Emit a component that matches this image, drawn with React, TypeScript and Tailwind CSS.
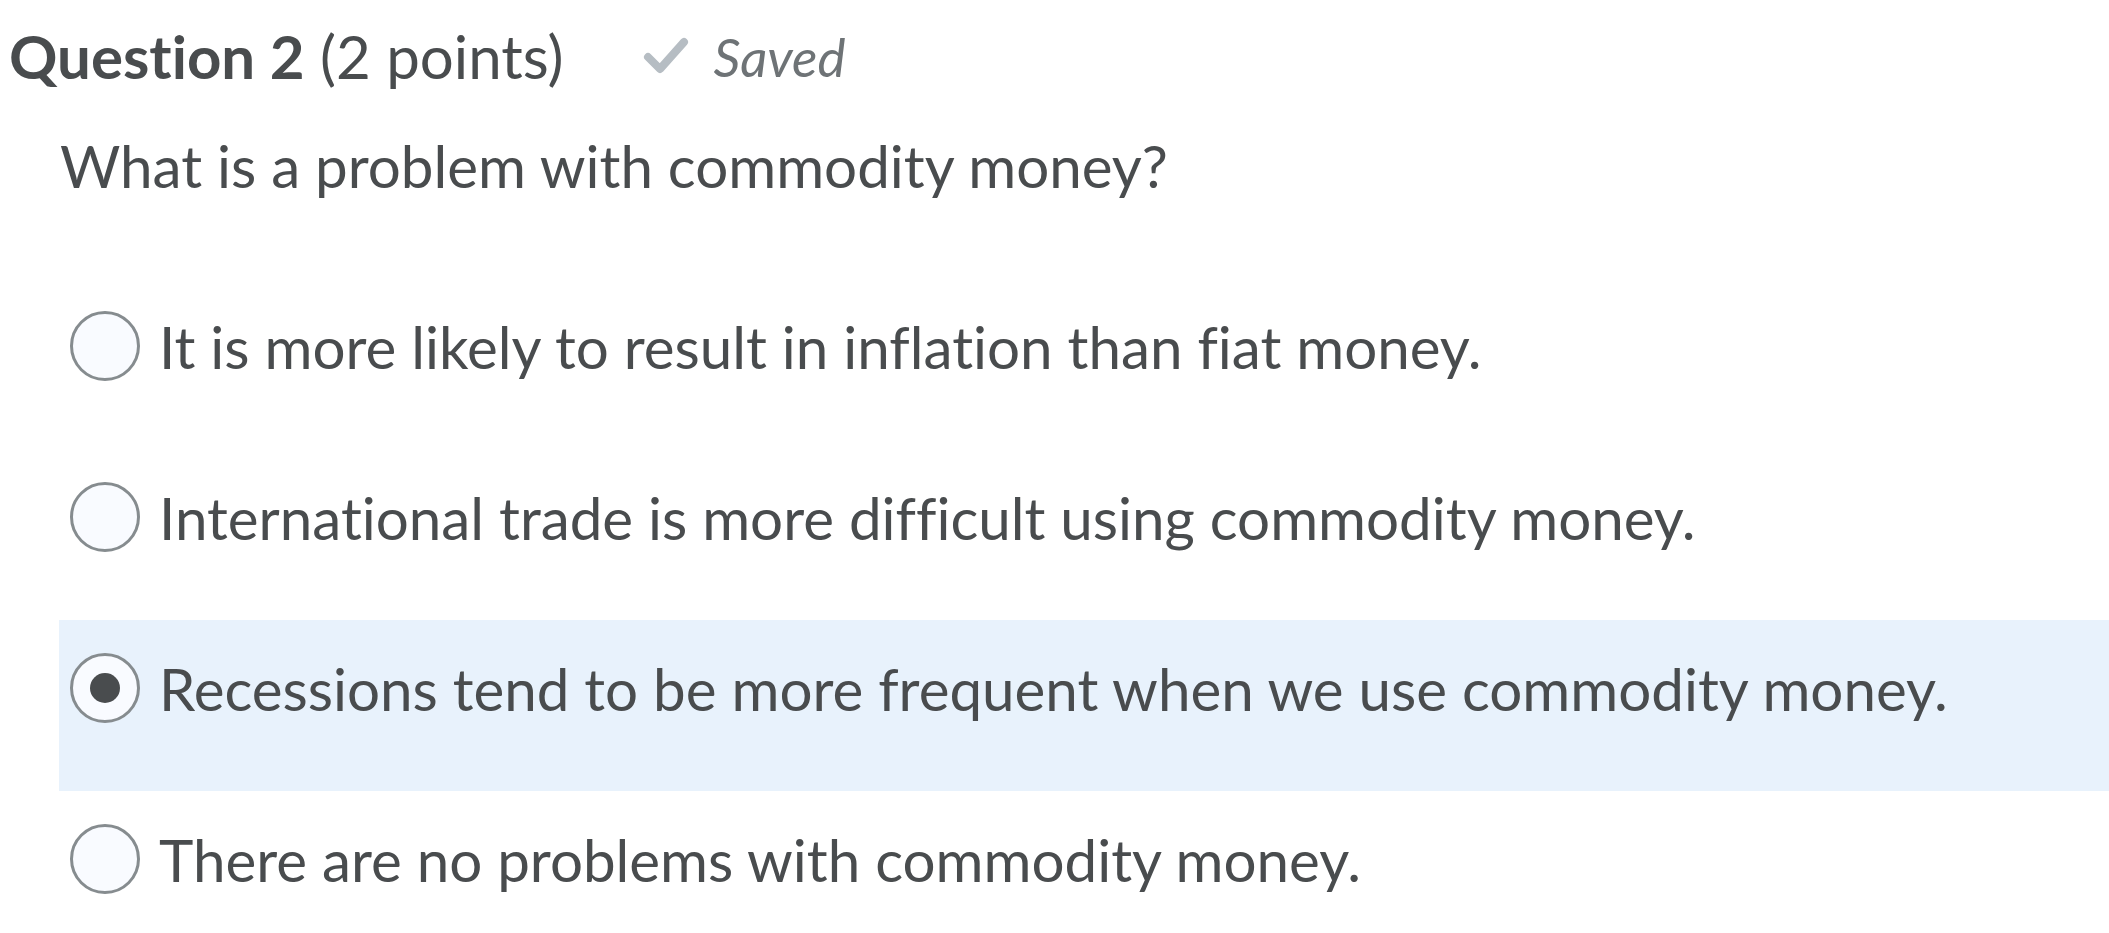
const options = [
  "It is more likely to result in inflation than fiat money.",
  "International trade is more difficult using commodity money.",
  "Recessions tend to be more frequent when we use commodity money.",
  "There are no problems with commodity money.",
]

const selected = 2

function Radio({ checked }: { checked: boolean }) {
  return (
    <div className="w-[70px] h-[70px] shrink-0 rounded-full border-[3px] border-[#868c8f] bg-[#f9fbff] flex items-center justify-center">
      {checked && <div className="w-[30px] h-[30px] rounded-full bg-[#494c4e]" />}
    </div>
  )
}

export default function App() {
  return (
    <div className="w-[2109px] h-[933px] overflow-hidden bg-white text-[#494c4e] font-['Lato','Liberation_Sans',sans-serif] [font-variant-ligatures:none]">
      <div className="flex items-center h-[112px] pl-[9px]">
        <h2 className="text-[60px] leading-none">
          <span className="font-bold">Question 2</span> (2 points)
        </h2>
        <div className="flex items-center ml-[80px]">
          <svg width="46" height="38" viewBox="0 0 46 38" className="shrink-0">
            <path d="M5 20 L17 32 L41 5" fill="none" stroke="#b6bdc3" strokeWidth="8" strokeLinecap="round" strokeLinejoin="round" />
          </svg>
          <span className="ml-[24px] text-[53px] italic text-[#6e7376] leading-none">Saved</span>
        </div>
      </div>

      <p className="pl-[60px] text-[58.3px] leading-[106px]">What is a problem with commodity money?</p>

      <div className="mt-[60px] ml-[59px]">
        {options.map((text, i) => (
          <div
            key={i}
            className={`h-[171px] pt-[33px] pl-[11px] ${i === selected ? "bg-[#e8f2fc]" : ""}`}
          >
            <div className="flex items-center h-[70px] gap-[19px]">
              <Radio checked={i === selected} />
              <span className="text-[58.3px] leading-none whitespace-nowrap">{text}</span>
            </div>
          </div>
        ))}
      </div>
    </div>
  )
}
